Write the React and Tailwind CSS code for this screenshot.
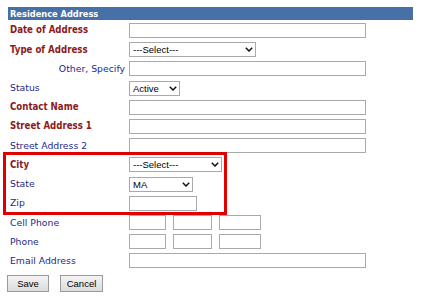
import React from "react";

const bold = "font-['DejaVu_Sans_Condensed','DejaVu_Sans',sans-serif] font-bold text-[9.6px] text-[#8b1a1a]";
const norm = "font-['DejaVu_Sans',sans-serif] text-[9.3px] text-[#27298a]";

const Chevron = () => (
  <svg width="8" height="5" viewBox="0 0 8 5" className="absolute right-[3px] top-[5px] pointer-events-none">
    <path d="M0.8 0.8 L4 4 L7.2 0.8" fill="none" stroke="#111" strokeWidth="1.5" />
  </svg>
);

const TextBox = ({ w = "w-[237px]", h = "h-[15px]" }) => (
  <input type="text" className={`block ${w} ${h} border border-[#a9a9a9] bg-white outline-none`} />
);

const Select = ({ w, value }) => (
  <div className={`relative ${w} h-[15px]`}>
    <select
      defaultValue={value}
      className="block appearance-none w-full h-[15px] border border-[#a9a9a9] bg-white pl-[3px] py-0 font-['Liberation_Sans',Arial,sans-serif] text-[9.5px] leading-[13px] text-black outline-none"
    >
      <option>{value}</option>
    </select>
    <Chevron />
  </div>
);

const Row = ({ label, kind = "norm", right = false, children }) => (
  <div className="flex items-center h-[19.2px]">
    <div className={`w-[121px] pl-[2px] ${right ? "text-right pr-[4px]" : ""} ${kind === "bold" ? bold : norm}`}>
      {label}
    </div>
    {children}
  </div>
);

const Phones = () => (
  <div className="flex gap-[7px]">
    <TextBox w="w-[37px]" />
    <TextBox w="w-[39px]" />
    <TextBox w="w-[42px]" />
  </div>
);

export default function App() {
  return (
    <div className="relative w-[421px] h-[302px] bg-white px-[8px] pt-[7px]">
      <div className="w-[405px] h-[13px] bg-[#4670a6] pl-[2px] flex items-center font-['DejaVu_Sans_Condensed','DejaVu_Sans',sans-serif] font-bold text-[9.2px] text-white">
        Residence Address
      </div>
      <div className="mt-[1px]">
        <Row label="Date of Address" kind="bold"><TextBox /></Row>
        <Row label="Type of Address" kind="bold"><Select w="w-[127px]" value="---Select---" /></Row>
        <Row label="Other, Specify" right><TextBox /></Row>
        <Row label="Status"><Select w="w-[51px]" value="Active" /></Row>
        <Row label="Contact Name" kind="bold"><TextBox /></Row>
        <Row label="Street Address 1" kind="bold"><TextBox /></Row>
        <Row label="Street Address 2"><TextBox /></Row>
        <Row label="City" kind="bold"><Select w="w-[93px]" value="---Select---" /></Row>
        <Row label="State"><Select w="w-[64px]" value="MA" /></Row>
        <Row label="Zip"><TextBox w="w-[68px]" /></Row>
        <Row label="Cell Phone"><Phones /></Row>
        <Row label="Phone"><Phones /></Row>
        <Row label="Email Address"><TextBox /></Row>
      </div>
      <div className="flex gap-[11px] mt-[5px] -ml-[1px]">
        {["Save", "Cancel"].map((b) => (
          <button
            key={b}
            className={`${b === "Save" ? "w-[42px]" : "w-[43px]"} h-[17px] border border-[#9a9a9a] bg-gradient-to-b from-[#f4f4f4] to-[#dcdcdc] font-['Liberation_Sans',Arial,sans-serif] text-[9.5px] text-black`}
          >
            {b}
          </button>
        ))}
      </div>
      <div className="absolute left-[3px] top-[152px] w-[224px] h-[63px] border-[3px] border-[#e00000] pointer-events-none" />
    </div>
  );
}
